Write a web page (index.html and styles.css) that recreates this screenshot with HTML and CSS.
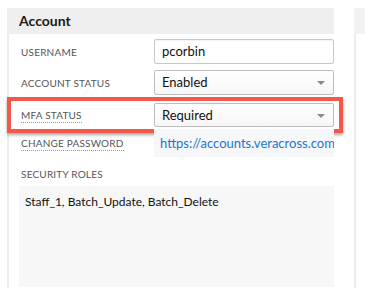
FILE: index.html
```html
<!DOCTYPE html>
<html><head><meta charset="utf-8">
<title>Account</title>
<link rel="stylesheet" href="styles.css">
</head>
<body>

<div class="page">
	<section class="panel">
		<div class="panel-head">Account</div>
		<div class="panel-body">
			<div class="row">
				<div class="label"><span>USERNAME</span></div>
				<div class="field input">pcorbin</div>
			</div>
			<div class="row">
				<div class="label"><span>ACCOUNT STATUS</span></div>
				<div class="field select">Enabled<span class="arrow"></span></div>
			</div>
			<div class="row mfa">
				<div class="label"><span class="dotted">MFA STATUS</span></div>
				<div class="field select">Required<span class="arrow"></span></div>
				<div class="highlight"></div>
			</div>
			<div class="row pw">
				<div class="label"><span class="dotted">CHANGE PASSWORD</span></div>
				<div class="field link"><a href="#">https://accounts.veracross.com/veracross/login</a></div>
			</div>
			<div class="block">
				<div class="label"><span>SECURITY ROLES</span></div>
				<div class="roles">Staff_1, Batch_Update, Batch_Delete</div>
			</div>
		</div>
	</section>
	<section class="panel side">
		<div class="panel-head"></div>
		<div class="panel-body"></div>
	</section>
</div>

</body>
</html>
```

FILE: styles.css
```css
body {
	margin: 0;
	background: #fff;
	font-family: Lato, "Open Sans", sans-serif;
	color: #111;
}
.page {
	display: flex;
	gap: 20px;
	padding: 8px 0 0 7px;
}
.panel {
	width: 327px;
	flex-shrink: 0;
}
.panel-head {
	height: 26px;
	background: #efefef;
	font-size: 14px;
	font-weight: bold;
	line-height: 26px;
	padding-left: 12px;
	color: #1a1a1a;
}
.panel-body {
	border-left: 2px solid #ececec;
	height: 254px;
	padding-top: 5px;
	box-sizing: border-box;
}
.side .panel-head {
	background: #f2f2f2;
}
.row {
	display: grid;
	grid-template-columns: 145px 180px;
	align-items: center;
	height: 25px;
	margin-bottom: 6px;
	position: relative;
}
.label {
	padding-left: 12px;
	font-size: 10px;
	color: #555;
	letter-spacing: 0.2px;
}
.label .dotted {
	padding-bottom: 1px;
	border-bottom: 1px dotted #999;
}
.field {
	height: 25px;
	box-sizing: border-box;
	font-size: 13px;
	line-height: 23px;
	padding-left: 7px;
	position: relative;
}
.input {
	border: 1px solid #c8c8c8;
	border-radius: 2px;
	box-shadow: inset 0 1px 1px rgba(0, 0, 0, .05);
}
.select {
	border: 1px solid #bdbdbd;
	border-radius: 2px;
	background: linear-gradient(#fff, #f6f6f6);
}
.arrow {
	position: absolute;
	right: 8px;
	top: 10px;
	border-left: 4px solid transparent;
	border-right: 4px solid transparent;
	border-top: 4px solid #8a8a8a;
}
.mfa {
	margin-top: 8px;
	margin-bottom: 3px;
	height: 23px;
}
.mfa .field {
	height: 24px;
	line-height: 22px;
}
.highlight {
	position: absolute;
	left: -2px;
	top: -6px;
	width: 336px;
	height: 36px;
	border: 4px solid #f4584a;
	box-sizing: border-box;
	box-shadow: 0 2px 3px rgba(0, 0, 0, .35);
	pointer-events: none;
}
.pw {
	height: 28px;
}
.link {
	background: #f6f7f8;
	height: 28px;
	line-height: 28px;
	padding-left: 6px;
	overflow: hidden;
	white-space: nowrap;
	font-size: 13px;
}
.link a {
	color: #1b74d2;
	text-decoration: none;
}
.block {
	padding-top: 5px;
}
.block .label {
	height: 14px;
	margin-bottom: 4px;
}
.roles {
	margin-left: 10px;
	width: 315px;
	height: 101px;
	box-sizing: border-box;
	background: #f7f7f7;
	font-size: 12px;
	padding: 8px 6px;
	color: #111;
}
```
